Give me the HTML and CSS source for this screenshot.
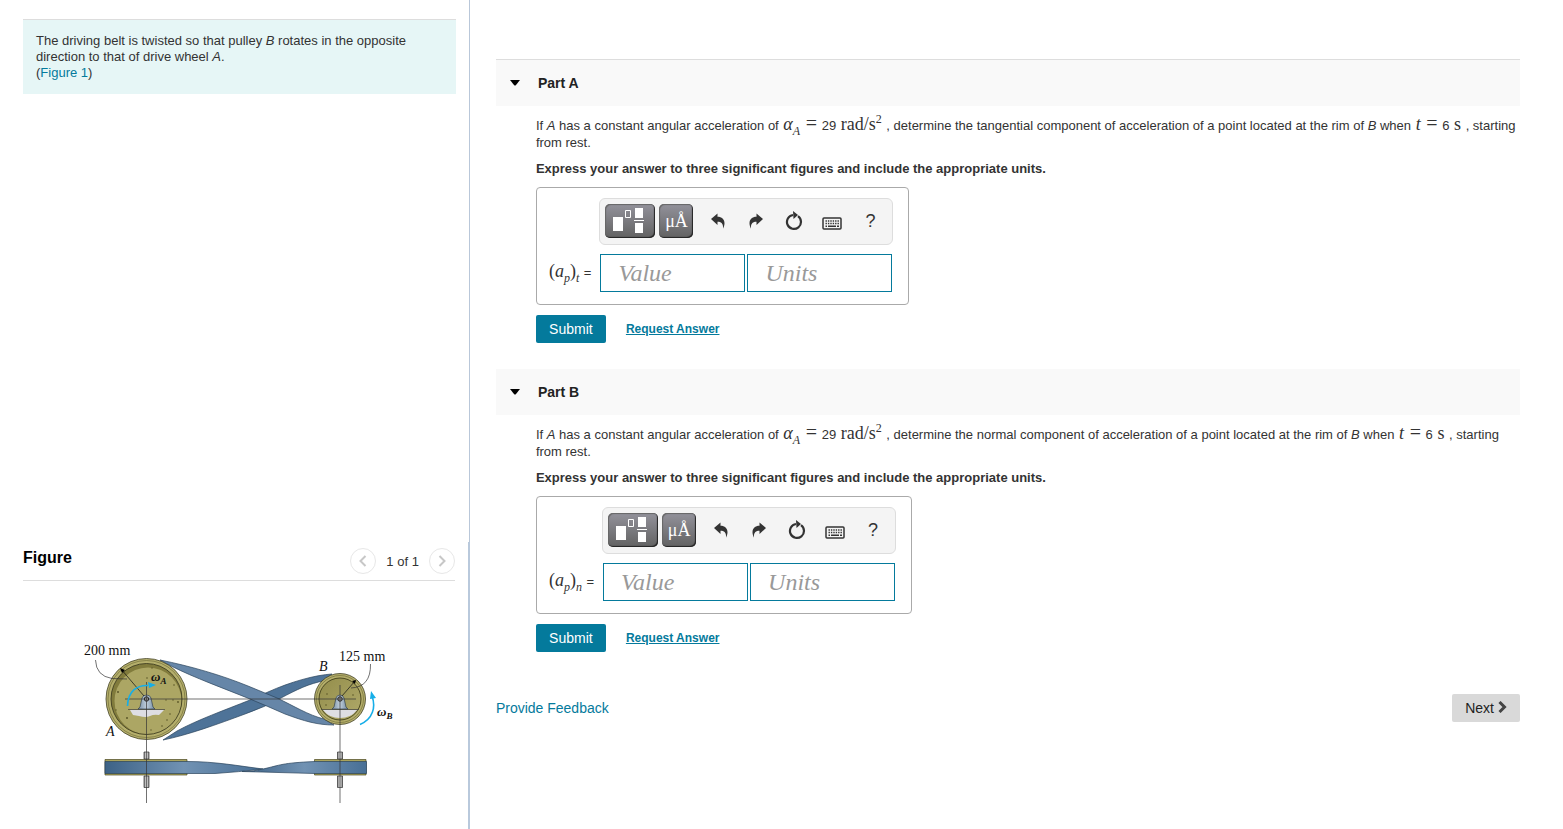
FILE: index.html
```html
<!DOCTYPE html>
<html lang="en">
<head>
    <meta charset="UTF-8">
    <meta name="viewport" content="width=device-width, initial-scale=1.0">
    <title>Belt and Pulley</title>
    <link rel="stylesheet" href="styles.css">
</head>
<body>

    <!-- shared icons -->
    <svg class="icon-defs" aria-hidden="true">
        <symbol id="icon-caret" viewBox="0 0 10 6"><path d="M0 0H10L6 5Q5 6 4 5Z"/></symbol>
        <symbol id="icon-templates" viewBox="0 0 50 34">
            <path fill="#fff" d="M8 13h10v14H8zM30 4h8v10h-8zM29 16h10v1H29zM30 19h8v10h-8z"/>
            <path fill="none" stroke="#fff" d="M20.500 6.500h5v7h-5z"/>
        </symbol>
        <symbol id="icon-undo" viewBox="0 0 16 16"><path d="M1 6 7.500 0.500v3.300c6 0 9 5 5.500 12C13.500 11 11.500 8.800 7.500 8.800V12Z"/></symbol>
        <symbol id="icon-redo" viewBox="0 0 16 16"><path d="M15 6 8.500 0.500v3.300c-6 0-9 5-5.500 12C2.500 11 4.500 8.800 8.500 8.800V12Z"/></symbol>
        <symbol id="icon-reset" viewBox="0 0 18 20">
            <path fill="none" stroke="#333" stroke-width="2.200" d="M13 5.200A7 7 0 1 1 8 4"/>
            <path d="M8 0 13 4 8.500 8Z"/>
        </symbol>
        <symbol id="icon-keyboard" viewBox="0 0 20 13">
            <rect x="1" y="1" width="18" height="11" rx="1" fill="none" stroke="#333" stroke-width="1.500"/>
            <path fill="none" stroke="#333" stroke-width="1.400" stroke-dasharray="1.400 1" d="M3.500 4H17M3.500 6.500H17"/>
            <path fill="none" stroke="#333" stroke-width="1.400" d="M3.500 9.300H5M6 9.300H14M15 9.300H17"/>
        </symbol>
    </svg>

    <div class="page">
        <aside class="side">
            <div class="problem-wrap">
                <div class="problem">
                    The driving belt is twisted so that pulley <i>B</i> rotates in the opposite direction to that of drive wheel <i>A</i>.<br>
                    (<a href="#figure">Figure 1</a>)
                </div>
            </div>

            <section class="figure" id="figure">
                <div class="figure-head">
                    <h2>Figure</h2>
                    <div class="pager">
                        <button type="button" aria-label="Previous figure"><svg width="8" height="12" viewBox="0 0 8 12"><path d="M6.500 1 1.500 6l5 5"/></svg></button>
                        <span>1 of 1</span>
                        <button type="button" aria-label="Next figure"><svg width="8" height="12" viewBox="0 0 8 12"><path d="m1.500 1 5 5-5 5"/></svg></button>
                    </div>
                </div>

                <svg class="diagram" width="340" height="180" viewBox="0 0 340 180" role="img" aria-label="Two pulleys with a twisted belt">
                    <defs>
                        <linearGradient id="belt" x1="0" x2="1"><stop offset="0" stop-color="#3d6286"/><stop offset=".5" stop-color="#7192b3"/><stop offset="1" stop-color="#486f95"/></linearGradient>
                        <linearGradient id="shaft" x1="0" x2="1"><stop offset="0" stop-color="#777"/><stop offset=".5" stop-color="#eee"/><stop offset="1" stop-color="#777"/></linearGradient>
                        <linearGradient id="bracket" x1="0" x2="1"><stop offset="0" stop-color="#7890a6"/><stop offset=".5" stop-color="#c0cedb"/><stop offset="1" stop-color="#6f889e"/></linearGradient>
                        <linearGradient id="wheel" x1="0" x2="1" y1="0" y2="1"><stop offset="0" stop-color="#938d4b"/><stop offset="1" stop-color="#b0aa6a"/></linearGradient>
                    </defs>

                    <!-- crossed belt -->
                    <g stroke="#29435c" stroke-width=".7">
                        <path fill="#4e7398" d="M262 39C245 40 220 47 198 57L180 65C155 75 127 85 107 96L93 105C118 100 148 89 175 79Q195 72 211 63C226 55 240 48 254 46Z"/>
                        <path fill="#6686a8" d="M90 25C120 31 151 40 178 51L207 63C224 71 238 80 254 84L264 90C247 90 234 86 215 79Q197 71 180 64C153 53 125 43 101 31Z"/>
                    </g>

                    <!-- wheel A -->
                    <circle cx="76.500" cy="64" r="40.500" fill="#b5af6c" stroke="#444326" stroke-width=".8"/>
                    <circle cx="76.500" cy="64" r="38.500" fill="none" stroke="#686531" stroke-width=".6"/>
                    <circle cx="76.500" cy="64" r="35.500" fill="#817b3c"/>
                    <circle cx="78" cy="66" r="33.500" fill="#aca664"/>
                    <circle cx="76.500" cy="64" r="35.500" fill="none" stroke="#35331a" stroke-width=".8"/>
                    <!-- wheel B -->
                    <circle cx="270" cy="64" r="25.500" fill="#b5af6c" stroke="#444326" stroke-width=".8"/>
                    <circle cx="270" cy="64" r="23.500" fill="none" stroke="#686531" stroke-width=".6"/>
                    <circle cx="270" cy="64" r="21" fill="url(#wheel)" stroke="#4b4820"/>
                    <g fill="#5c5728"><circle cx="48" cy="57" r="1"/><circle cx="46" cy="75" r=".7"/><circle cx="57" cy="83" r="1"/><circle cx="82" cy="33" r=".7"/><circle cx="77" cy="43" r=".8"/><circle cx="104" cy="50" r=".8"/><circle cx="96" cy="65" r=".7"/><circle cx="103" cy="65" r=".7"/><circle cx="108" cy="67" r=".9"/><circle cx="100" cy="79" r=".8"/><circle cx="97" cy="85" r=".8"/><circle cx="92" cy="91" r=".8"/><circle cx="81" cy="95" r=".7"/><circle cx="257" cy="59" r=".8"/><circle cx="256" cy="70" r=".8"/><circle cx="283" cy="60" r=".8"/></g>

                    <!-- pulleys seen from the edge -->
                    <path fill="#aaa35a" stroke="#4b4820" stroke-width=".7" d="M35 124.500H117V140H35ZM244.500 124.500H296V140H244.500Z"/>
                    <path fill="url(#belt)" stroke="#29435c" stroke-width=".7" d="M35 126.500H118C145 126.500 169 131 193 134Q168 137 145 138.500H35Z"/>
                    <path fill="url(#belt)" stroke="#29435c" stroke-width=".7" d="M172 136.500Q184 136.500 193 134C211 130 211 128 245 126.500H296.500V138.500H245Z"/>
                    <path fill="url(#shaft)" stroke="#333" stroke-width=".7" d="M74 117h5v7h-5zM74 141h5v11.500h-5z"/>
                    <path fill="url(#shaft)" stroke="#333" stroke-width=".7" d="M267.500 117h5v7h-5zM267.500 141h5v11.500h-5z"/>

                    <!-- supports -->
                    <path fill="#dedee3" d="M60 75H94L89 80Q84 79 80 81T69 81L63 80Z"/>
                    <path fill="none" stroke="#444" stroke-width=".7" d="M58 74.500H95"/>
                    <path fill="url(#bracket)" stroke="#33414e" stroke-width=".7" d="M68 74 70 72 72 63Q73 60 76.500 60T81 63L83 72 85 74Z"/>
                    <circle cx="76.500" cy="64" r="2.200" fill="#aaa" stroke="#222"/>
                    <path fill="#dedee3" d="M253 75H287Q281 83 270 83T253 75Z"/>
                    <path fill="none" stroke="#444" stroke-width=".7" d="M251 74.500H289"/>
                    <path fill="url(#bracket)" stroke="#33414e" stroke-width=".7" d="M262 74 264 72 266 63Q267 60 270 60T274 63L276 72 278 74Z"/>
                    <circle cx="270" cy="64" r="2.200" fill="#aaa" stroke="#222"/>

                    <g fill="none" stroke="#333" stroke-width=".7">
                        <path d="M55 64H286M76.500 47V168M270 50V168"/>
                        <path d="M25.500 25Q26 41 42 43.500L57 44M300.500 29Q301 52 281 53"/>
                        <path stroke="#111" d="M74 61 51 34M272 61 285 46"/>
                    </g>
                    <path d="m50 33 5 2-3 3ZM286 45l-1 4-3-3Z"/>
                    <g fill="none" stroke="#16aee8" stroke-width="1.600"><path d="M57.500 71C58 56 67 50 78 50.500M290 89.500C303 84 306 72 302 61"/></g>
                    <path fill="#16aee8" d="m78 47 8 3-7 3ZM301 56l5 7-6 1Z"/>

                    <g class="diagram-text">
                        <text x="14" y="20">200 mm</text>
                        <text x="269" y="26">125 mm</text>
                        <text x="36" y="101" font-style="italic">A</text>
                        <text x="249" y="36" font-style="italic">B</text>
                        <text x="81" y="46" class="omega">ω<tspan class="omega-sub" dy="3">A</tspan></text>
                        <text x="307" y="81" class="omega">ω<tspan class="omega-sub" dy="3">B</tspan></text>
                    </g>
                </svg>
            </section>
        </aside>

        <main class="main">
            <section class="part part-a">
                <h2 class="part-head"><button type="button" aria-expanded="true"><svg width="10" height="6"><use href="#icon-caret"/></svg>Part A</button></h2>
                <div class="part-body">
                    <p class="question">If <i>A</i> has a constant angular acceleration of <span class="math"><i>α</i><sub>A</sub></span> <span class="math eq">=</span> 29 <span class="math">rad/s<sup>2</sup></span> , determine the tangential component of acceleration of a point located at the rim of <i>B</i> when <span class="math"><i>t</i></span> <span class="math eq">=</span> 6 <span class="math">s</span> , starting from rest.</p>
                    <p class="instructions">Express your answer to three significant figures and include the appropriate units.</p>
                    <form>
                        <div class="answer">
                            <div class="toolbar">
                                <button type="button" class="dark" aria-label="Templates"><svg width="50" height="34"><use href="#icon-templates"/></svg></button>
                                <button type="button" class="dark symbols">μÅ</button>
                                <button type="button" class="tool first" aria-label="Undo"><svg width="16" height="16"><use href="#icon-undo"/></svg></button>
                                <button type="button" class="tool" aria-label="Redo"><svg width="16" height="16"><use href="#icon-redo"/></svg></button>
                                <button type="button" class="tool" aria-label="Reset"><svg width="18" height="20"><use href="#icon-reset"/></svg></button>
                                <button type="button" class="tool keyboard" aria-label="Keyboard shortcuts"><svg width="20" height="13"><use href="#icon-keyboard"/></svg></button>
                                <button type="button" class="tool help">?</button>
                            </div>
                            <label for="value-a"><span class="math">(<i>a<sub>p</sub></i>)<sub>t</sub></span> =</label>
                            <div class="fields">
                                <input type="text" id="value-a" placeholder="Value">
                                <input type="text" aria-label="Units" placeholder="Units">
                            </div>
                        </div>
                        <div class="actions">
                            <button type="button" class="submit">Submit</button>
                            <a href="#">Request Answer</a>
                        </div>
                    </form>
                </div>
            </section>

            <section class="part part-b">
                <h2 class="part-head"><button type="button" aria-expanded="true"><svg width="10" height="6"><use href="#icon-caret"/></svg>Part B</button></h2>
                <div class="part-body">
                    <p class="question">If <i>A</i> has a constant angular acceleration of <span class="math"><i>α</i><sub>A</sub></span> <span class="math eq">=</span> 29 <span class="math">rad/s<sup>2</sup></span> , determine the normal component of acceleration of a point located at the rim of <i>B</i> when <span class="math"><i>t</i></span> <span class="math eq">=</span> 6 <span class="math">s</span> , starting from rest.</p>
                    <p class="instructions">Express your answer to three significant figures and include the appropriate units.</p>
                    <form>
                        <div class="answer">
                            <div class="toolbar">
                                <button type="button" class="dark" aria-label="Templates"><svg width="50" height="34"><use href="#icon-templates"/></svg></button>
                                <button type="button" class="dark symbols">μÅ</button>
                                <button type="button" class="tool first" aria-label="Undo"><svg width="16" height="16"><use href="#icon-undo"/></svg></button>
                                <button type="button" class="tool" aria-label="Redo"><svg width="16" height="16"><use href="#icon-redo"/></svg></button>
                                <button type="button" class="tool" aria-label="Reset"><svg width="18" height="20"><use href="#icon-reset"/></svg></button>
                                <button type="button" class="tool keyboard" aria-label="Keyboard shortcuts"><svg width="20" height="13"><use href="#icon-keyboard"/></svg></button>
                                <button type="button" class="tool help">?</button>
                            </div>
                            <label for="value-b"><span class="math">(<i>a<sub>p</sub></i>)<sub>n</sub></span> =</label>
                            <div class="fields">
                                <input type="text" id="value-b" placeholder="Value">
                                <input type="text" aria-label="Units" placeholder="Units">
                            </div>
                        </div>
                        <div class="actions">
                            <button type="button" class="submit">Submit</button>
                            <a href="#">Request Answer</a>
                        </div>
                    </form>
                </div>
            </section>

            <footer>
                <a href="#">Provide Feedback</a>
                <button type="button" class="next">Next <svg width="9" height="12" viewBox="0 0 9 12"><path d="m1.500 1 5 5-5 5"/></svg></button>
            </footer>
        </main>
    </div>

</body>
</html>
```
FILE: styles.css
```css
* {
  box-sizing: border-box;
}

body {
  margin: 0;
  background: #fff;
  color: #333;
  font-family: "Liberation Sans", Arial, sans-serif;
  font-size: 13px;
  line-height: 16px;
}

h2, p {
  margin: 0;
}

button {
  font-family: inherit;
  padding: 0;
  border: none;
  background: none;
  cursor: pointer;
}

a {
  color: #047a9c;
  text-decoration: none;
}

.icon-defs {
  display: none;
}

.page {
  display: flex;
  min-height: 100vh;
}

/* left column */
.side {
  flex: 0 0 30%;
  display: flex;
  flex-direction: column;
}

.problem-wrap {
  flex: 1;
  padding: 19px 13px 0 23px;
  border-right: 1px solid #b9c7d9;
  margin-right: -1px;
}

.problem {
  padding: 13px;
  border-top: 1px solid #ddd;
  background: #e6f6f6;
}

.figure {
  padding: 0 13px 14px 23px;
  border-right: 2px solid #b9c9dc;
  margin-right: -1px;
}

.figure-head {
  display: flex;
  justify-content: space-between;
  height: 39px;
  padding-top: 6px;
  border-bottom: 1px solid #ddd;
}

.figure-head h2 {
  color: #000;
  font-size: 16px;
  line-height: 20px;
}

.pager {
  display: flex;
  gap: 10px;
  line-height: 28px;
}

.pager button {
  display: flex;
  align-items: center;
  justify-content: center;
  width: 26px;
  height: 26px;
  border: 1px solid #e7e7e7;
  border-radius: 50%;
}

.pager path {
  fill: none;
  stroke: #c7c7c7;
  stroke-width: 2;
}

.diagram {
  display: block;
  margin: 54px 0 0 47px;
}

.diagram-text {
  fill: #111;
  font-family: "Liberation Serif", serif;
  font-size: 14px;
}

.omega {
  font-size: 13px;
  font-style: italic;
  font-weight: bold;
}

.omega-sub {
  font-size: 9px;
}

/* right column */
.main {
  flex: 1;
  padding: 59px 43px 0 27px;
}

.part-head {
  height: 46px;
  background: #f9f9f9;
}

.part-a .part-head {
  height: 47px;
  border-top: 1px solid #ddd;
}

.part-head button {
  display: flex;
  align-items: center;
  gap: 18px;
  height: 46px;
  padding-left: 14px;
  color: #222;
  font-size: 14px;
  font-weight: bold;
}

.part-body {
  padding: 11px 0 26px 40px;
}

.question {
  line-height: 17px;
}

.math {
  margin: 0 1px;
  font-family: "Liberation Serif", serif;
  font-size: 18px;
  line-height: 0;
}

.math sub,
.math sup {
  font-size: 12px;
  line-height: 0;
}

.math sub {
  font-style: italic;
}

.eq {
  font-size: 20px;
}

.instructions {
  margin: 10px 0;
  font-weight: bold;
}

.answer {
  display: inline-grid;
  grid-template-columns: auto auto;
  gap: 9px 8px;
  align-items: center;
  padding: 10px 15px 12px 11px;
  border: 1px solid #aaa;
  border-radius: 4px;
  vertical-align: top;
}

.toolbar {
  grid-column: 2;
  display: flex;
  gap: 4px;
  padding: 5px 5px 6px;
  border: 1px solid #ddd;
  border-radius: 6px;
  background: #f4f4f4;
}

.toolbar .dark {
  height: 34px;
  border-radius: 5px;
  box-shadow: inset -1px -1px 1px #222, inset 1px 1px 1px #666;
  background: linear-gradient(#93929b, #626262);
}

.toolbar svg {
  display: block;
  fill: #333;
}

.toolbar .symbols {
  width: 34px;
  color: #fff;
  font-family: "Liberation Serif", serif;
  font-size: 18px;
}

.toolbar .tool {
  display: flex;
  align-items: center;
  justify-content: center;
  width: 34px;
  height: 34px;
}

.toolbar .first {
  margin-left: 4px;
}

.toolbar .keyboard {
  padding-top: 4px;
}

.toolbar .help {
  color: #333;
  font-size: 18px;
}

.fields {
  display: flex;
  gap: 2px;
  padding: 0 1px;
}

.fields input {
  width: 145px;
  height: 38px;
  padding: 0 17px;
  border: 1px solid #047a9c;
  font-family: "Liberation Serif", serif;
  font-size: 24px;
  font-style: italic;
}

.fields input::placeholder {
  color: #999;
}

.actions {
  display: flex;
  align-items: center;
  gap: 20px;
  margin-top: 10px;
}

.actions a {
  font-size: 12px;
  font-weight: bold;
  text-decoration: underline;
}

.submit {
  width: 70px;
  height: 28px;
  border-radius: 2px;
  background: #047a9c;
  color: #fff;
  font-size: 14px;
}

footer {
  display: flex;
  justify-content: space-between;
  align-items: center;
  margin-top: 16px;
  font-size: 14px;
}

.next {
  width: 68px;
  height: 28px;
  border-radius: 2px;
  background: #d9d9d9;
  color: #222;
  font-size: 14px;
}

.next path {
  fill: none;
  stroke: #444;
  stroke-width: 3;
}
```
